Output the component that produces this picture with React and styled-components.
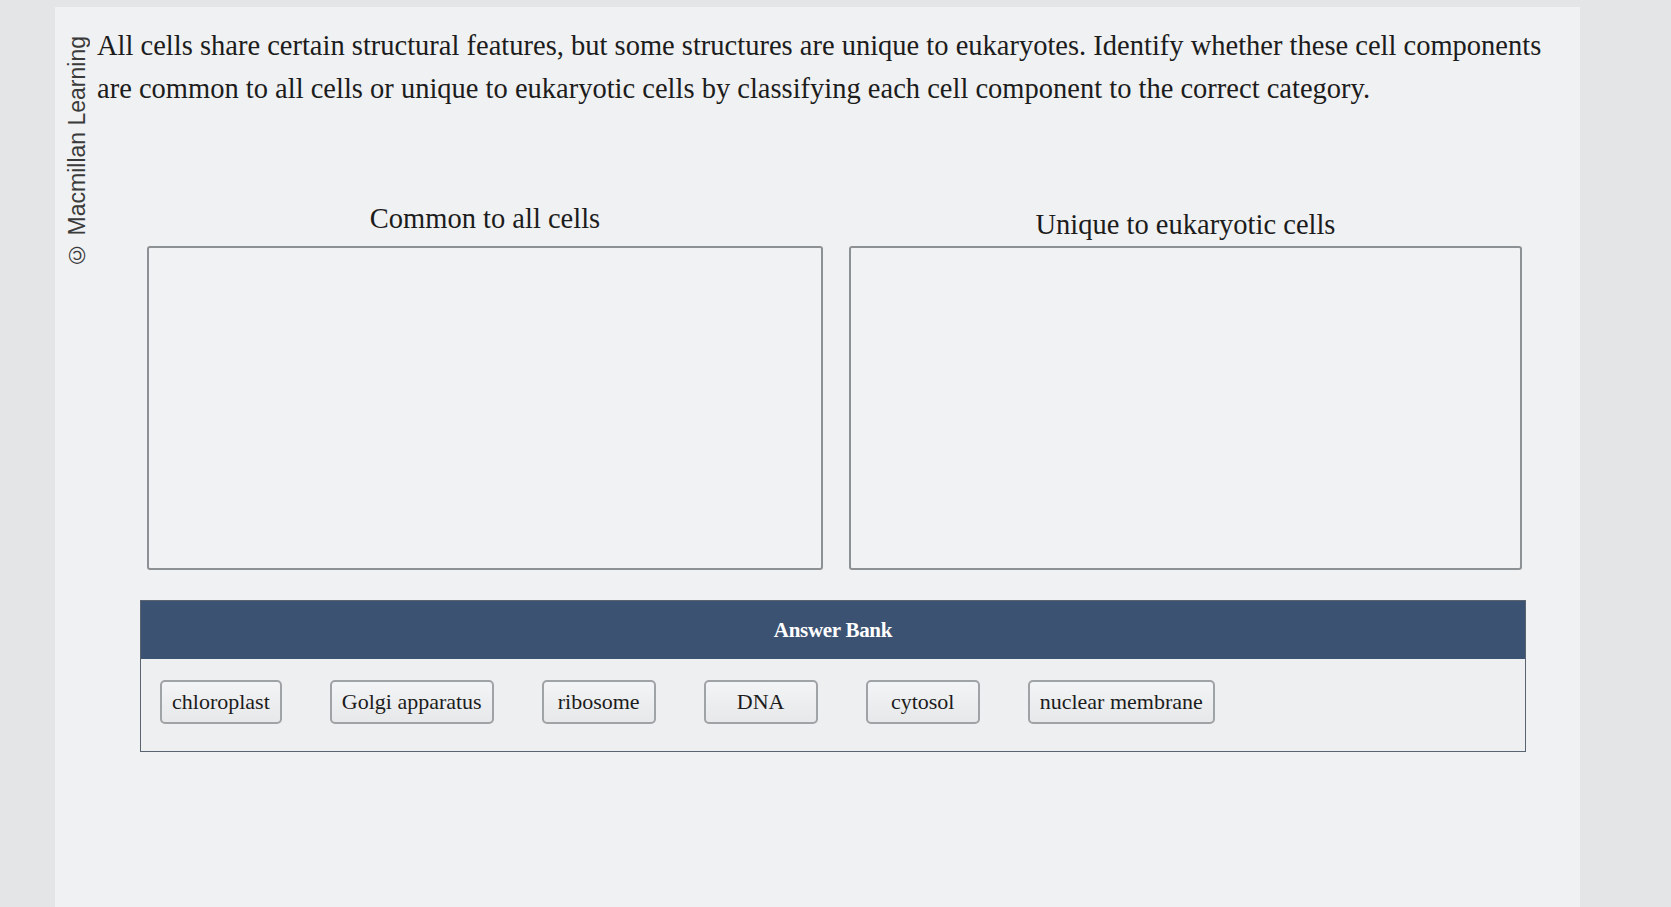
import React from "react";
import styled, { createGlobalStyle } from "styled-components";

const items = [
  "chloroplast",
  "Golgi apparatus",
  "ribosome",
  "DNA",
  "cytosol",
  "nuclear membrane",
];

const App = () => {
  return (
    <>
      <Global />
      <Page>
        <Panel>
          <Copyright>© Macmillan Learning</Copyright>
          <Main>
            <Question>
              All cells share certain structural features, but some structures
              are unique to eukaryotes. Identify whether these cell components
              are common to all cells or unique to eukaryotic cells by
              classifying each cell component to the correct category.
            </Question>
            <Categories>
              <Category>
                <Heading>Common to all cells</Heading>
                <DropBox />
              </Category>
              <Category>
                <Heading $shift={6}>Unique to eukaryotic cells</Heading>
                <DropBox />
              </Category>
            </Categories>
            <Bank>
              <BankHeader>Answer Bank</BankHeader>
              <BankBody>
                {items.map((item) => (
                  <Chip key={item}>{item}</Chip>
                ))}
              </BankBody>
            </Bank>
          </Main>
        </Panel>
      </Page>
    </>
  );
};

const Global = createGlobalStyle`
  html, body {
    margin: 0;
    padding: 0;
    background: #e4e5e7;
  }
`;

const Page = styled.div`
  min-height: 907px;
  padding-left: 55px;
  padding-top: 7px;
  box-sizing: border-box;
  overflow: hidden;
`;

const Panel = styled.div`
  width: 1525px;
  min-height: 900px;
  background: #f0f1f2;
  display: flex;
  align-items: flex-start;
  padding: 17px 0 0 10px;
  box-sizing: border-box;
  font-family: "Liberation Serif", "Times New Roman", serif;
  color: #1c1c1c;
`;

const Copyright = styled.div`
  writing-mode: vertical-rl;
  transform: rotate(180deg);
  font-family: "Liberation Sans", Arial, sans-serif;
  font-size: 23px;
  color: #3a3a3a;
  margin-top: 12px;
  width: 24px;
  line-height: 24px;
  flex-shrink: 0;
`;

const Main = styled.div`
  margin-left: 8px;
  display: flex;
  flex-direction: column;
`;

const Question = styled.div`
  width: 1470px;
  font-size: 28.5px;
  line-height: 43px;
`;

const Categories = styled.div`
  display: grid;
  grid-template-columns: 676px 673px;
  column-gap: 26px;
  margin-top: 92px;
  margin-left: 50px;
`;

const Category = styled.div`
  display: flex;
  flex-direction: column;
  align-items: center;
`;

const Heading = styled.div`
  font-size: 28.5px;
  line-height: 34px;
  margin-top: ${(p) => p.$shift || 0}px;
  margin-bottom: ${(p) => 10 - (p.$shift || 0)}px;
`;

const DropBox = styled.div`
  width: 100%;
  height: 324px;
  border: 2px solid #8e9193;
  border-radius: 3px;
  background: #f1f2f3;
  box-sizing: border-box;
`;

const Bank = styled.div`
  margin-top: 30px;
  margin-left: 43px;
  width: 1386px;
  border: 1px solid #5a6470;
  box-sizing: border-box;
`;

const BankHeader = styled.div`
  height: 58px;
  background: #3b5272;
  color: #fff;
  font-weight: 700;
  font-size: 21px;
  display: flex;
  align-items: center;
  justify-content: center;
  letter-spacing: -0.3px;
`;

const BankBody = styled.div`
  height: 92px;
  background: #eeeff0;
  display: flex;
  align-items: center;
  gap: 48px;
  padding: 0 0 6px 19px;
  box-sizing: border-box;
`;

const Chip = styled.div`
  min-width: 114px;
  height: 44px;
  padding: 0 10px;
  box-sizing: border-box;
  display: flex;
  align-items: center;
  justify-content: center;
  border: 2px solid #a0a3a6;
  border-radius: 5px;
  background: linear-gradient(#f3f4f5, #e7e8e9);
  font-size: 22px;
  color: #1c1c1c;
`;

export default App;
